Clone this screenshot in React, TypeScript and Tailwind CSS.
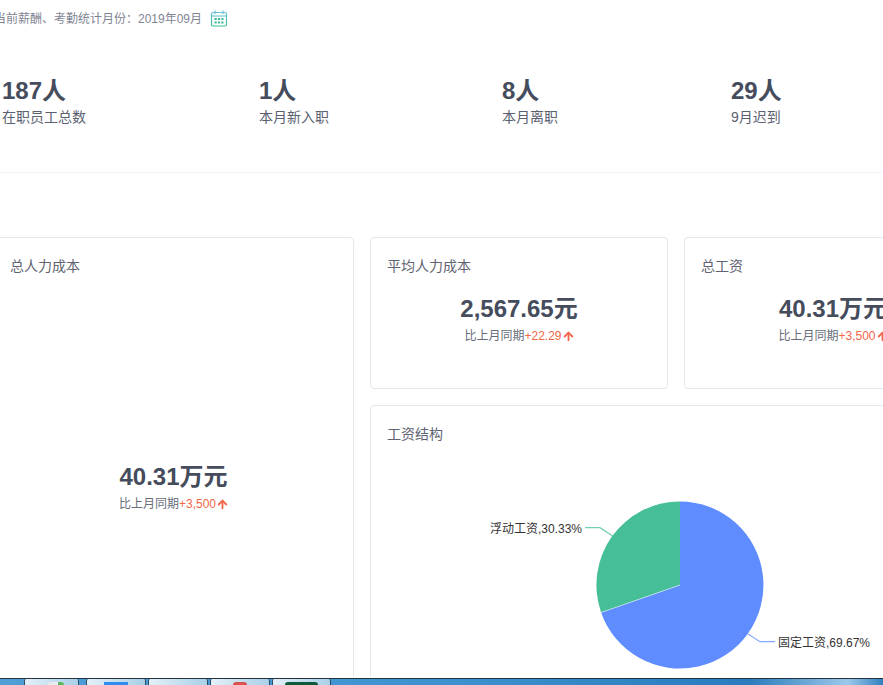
import React from 'react';
import { ArrowUp } from 'lucide-react';

const stats = [
  { value: '187人', label: '在职员工总数', width: 'w-[257px]' },
  { value: '1人', label: '本月新入职', width: 'w-[243px]' },
  { value: '8人', label: '本月离职', width: 'w-[229px]' },
  { value: '29人', label: '9月迟到', width: 'w-[150px]' },
];

const CalendarIcon = () => (
  <svg width="18" height="18" viewBox="0 0 18 18" fill="none" className="ml-[8px] shrink-0">
    <defs>
      <linearGradient id="cal" x1="0" y1="0" x2="0" y2="1">
        <stop offset="0" stopColor="#6cc4d8" />
        <stop offset="1" stopColor="#36bd98" />
      </linearGradient>
    </defs>
    <rect x="1.5" y="2.5" width="15" height="13.5" rx="1.5" stroke="url(#cal)" strokeWidth="1.2" />
    <path d="M2 6H16" stroke="#5cc4c4" strokeWidth="1" />
    <path d="M5 0.5V4M13 0.5V4" stroke="#6cc4d8" strokeWidth="1.2" />
    <path
      d="M4.5 8h2.2v2h-2.2zM7.9 8h2.2v2H7.9zM11.3 8h2.2v2h-2.2zM4.5 11.5h2.2v2h-2.2zM7.9 11.5h2.2v2H7.9zM11.3 11.5h2.2v2h-2.2z"
      fill="#3dbd9c"
    />
  </svg>
);

const CostCard = ({
  title,
  value,
  delta,
  className,
  bodyClass,
}: {
  title: string;
  value: string;
  delta: string;
  className: string;
  bodyClass: string;
}) => (
  <div className={`border border-[#e4e7ed] rounded-[4px] bg-white shrink-0 px-4 pt-[19px] ${className}`}>
    <div className="text-[14px] leading-[18px] text-[#5f6472]">{title}</div>
    <div className={`flex flex-col items-center ${bodyClass}`}>
      <div className="text-[24px] leading-[32px] font-bold text-[#454c5c] whitespace-nowrap">{value}</div>
      <div className="flex items-center text-[12px] leading-[20px] text-[#666c7a] mt-[1px] whitespace-nowrap">
        比上月同期
        <span className="text-[#f2674a]">{delta}</span>
        <ArrowUp size={13} strokeWidth={3.4} className="text-[#f2674a] -mr-[1px]" />
      </div>
    </div>
  </div>
);

const PieChart = () => (
  <svg viewBox="0 0 612 226" className="block w-[612px] h-[226px] mt-[7px] -ml-4 overflow-visible">
    <path d="M309 51.5A83.5 83.5 0 1 1 230.1 162.5L309 135Z" fill="#5f8cff" />
    <path d="M309 51.5A83.5 83.5 0 0 0 230.1 162.5L309 135Z" fill="#46bf98" />
    <path d="M309 135L230.1 162.5" stroke="#ffffff" strokeWidth="0.5" />
    <path d="M241.7 86 L229 77.7 H214" stroke="#46bf98" strokeOpacity="0.75" strokeWidth="1.2" fill="none" />
    <path d="M377 184 L389 191.7 H404" stroke="#5f8cff" strokeOpacity="0.75" strokeWidth="1.2" fill="none" />
    <text x="211" y="83" textAnchor="end" fontSize="12" fill="#333333">浮动工资,30.33%</text>
    <text x="407" y="197" fontSize="12" fill="#333333">固定工资,69.67%</text>
  </svg>
);

const taskButtons = [
  { width: 'w-[55px]', mr: 'mr-[7px]', icon: 'w-[16px] bg-[linear-gradient(90deg,#e8ecef_60%,#5cb85c_60%)] ml-[23px] rounded-t-full' },
  { width: 'w-[60px]', mr: 'mr-[2px]', icon: 'w-[24px] h-[2px] bg-[#2f8df0] ml-[17px]' },
  { width: 'w-[60px]', mr: 'mr-[2px]', icon: 'w-0' },
  { width: 'w-[60px]', mr: 'mr-[2px]', icon: 'w-[14px] bg-[#d9534f] ml-[22px] rounded-t-full' },
  { width: 'w-[59px]', mr: 'mr-0', icon: 'w-[33px] bg-[#0f5a3a] ml-[12px] rounded-t-full' },
];

export default function App() {
  return (
    <div className="w-[883px] h-[685px] overflow-hidden bg-white flex flex-col font-['Liberation_Sans','Noto_Sans_CJK_SC',sans-serif]">
      <div className="h-[676px] shrink-0 overflow-hidden">
        <div className="w-[1000px] -ml-[7px]">
          <div className="h-[172px] border-b border-[#f3f3f5] box-content">
            <div className="flex items-center h-[18px] pt-[10px] pl-[1px] box-content text-[12px] text-[#7f8592] whitespace-nowrap">
              当前薪酬、考勤统计月份：2019年09月
              <CalendarIcon />
            </div>
            <div className="flex pl-[9px] pt-[47px]">
              {stats.map((s) => (
                <div key={s.label} className={s.width}>
                  <div className="text-[24px] leading-[32px] font-bold text-[#454c5c]">{s.value}</div>
                  <div className="text-[14px] leading-[20px] text-[#5a6070]">{s.label}</div>
                </div>
              ))}
            </div>
          </div>
          <div className="flex gap-4 pt-[64px]">
            <CostCard
              title="总人力成本"
              value="40.31万元"
              delta="+3,500"
              className="w-[361px] h-[500px]"
              bodyClass="pt-[186px]"
            />
            <div className="flex flex-col gap-4 w-[612px] shrink-0">
              <div className="flex gap-4">
                <CostCard
                  title="平均人力成本"
                  value="2,567.65元"
                  delta="+22.29"
                  className="w-[298px] h-[152px]"
                  bodyClass="pt-[18px]"
                />
                <CostCard
                  title="总工资"
                  value="40.31万元"
                  delta="+3,500"
                  className="w-[298px] h-[152px]"
                  bodyClass="pt-[18px]"
                />
              </div>
              <div className="border border-[#e4e7ed] rounded-[4px] bg-white px-4 pt-[19px] h-[320px]">
                <div className="text-[14px] leading-[18px] text-[#5f6472]">工资结构</div>
                <PieChart />
              </div>
            </div>
          </div>
        </div>
      </div>
      <div className="h-[2px] shrink-0 bg-white" />
      <div className="h-[7px] shrink-0 flex border-t border-[#26323d] pl-[24px] bg-[linear-gradient(90deg,#4f9fd6_0%,#3d92cf_50%,#2a7cbc_85%,#9cc9ea_96%,#2f80c0_100%)]">
        {taskButtons.map((b, i) => (
          <div
            key={i}
            className={`h-full flex items-end overflow-hidden rounded-t-[2px] border-x border-[#2d4a60] bg-[linear-gradient(90deg,#e4f0f8,#a9d0e8)] ${b.width} ${b.mr}`}
          >
            <div className={`h-[3px] ${b.icon}`} />
          </div>
        ))}
      </div>
    </div>
  );
}
